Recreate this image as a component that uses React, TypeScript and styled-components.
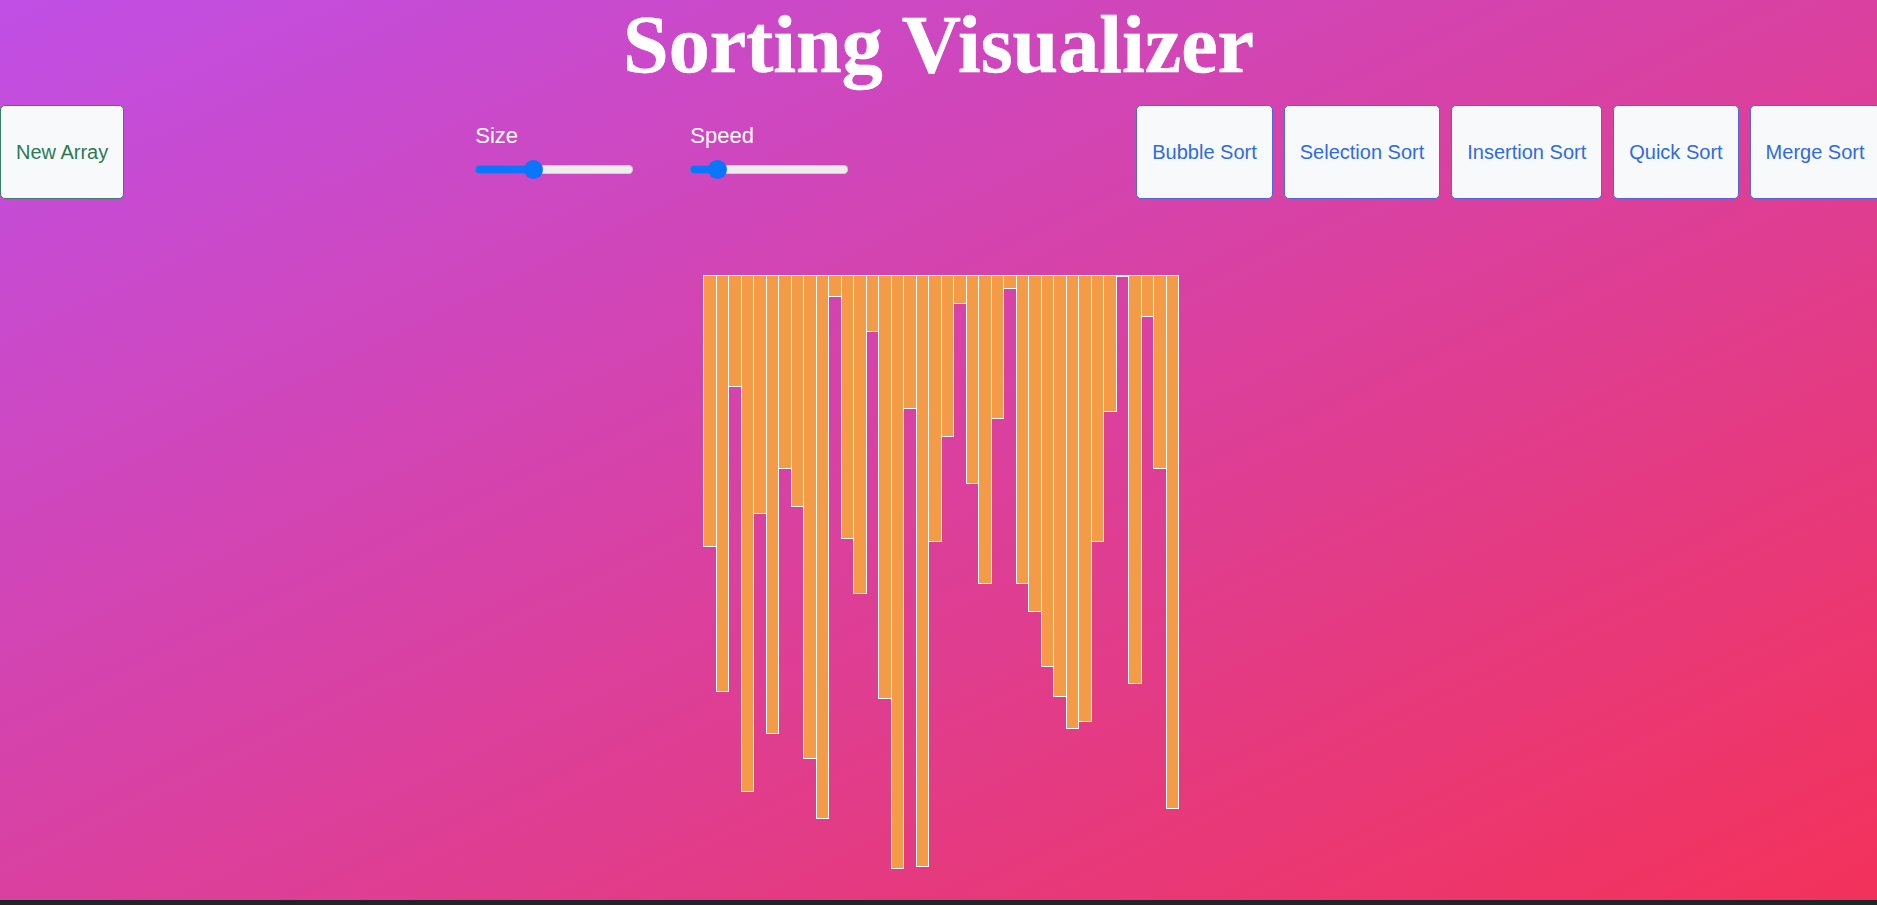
import { useState } from 'react';
import type { FC } from 'react';
import styled, { createGlobalStyle } from 'styled-components';

const barHeights = [
  272, 417, 112, 517, 239, 459, 194, 232, 484, 544, 22, 264, 319, 57, 424, 594, 134, 592, 267,
  162, 29, 209, 309, 144, 14, 309, 337, 392, 422, 454, 447, 267, 137, 2, 409, 42, 194, 534
];

const algorithms = ['Bubble Sort', 'Selection Sort', 'Insertion Sort', 'Quick Sort', 'Merge Sort'];

const App: FC = () => {
  const [size, setSize] = useState(35);
  const [speed, setSpeed] = useState(13);

  return (
    <>
      <GlobalStyle />
      <Page>
        <Title>Sorting Visualizer</Title>
        <Toolbar>
          <ActionButton $tone='success'>New Array</ActionButton>
          <Controls>
            <Control>
              <ControlLabel>Size</ControlLabel>
              <RangeSlider value={size} onChange={setSize} />
            </Control>
            <Control>
              <ControlLabel>Speed</ControlLabel>
              <RangeSlider value={speed} onChange={setSpeed} />
            </Control>
          </Controls>
          <SortGroup>
            {algorithms.map((name) => (
              <ActionButton key={name} $tone='primary'>
                {name}
              </ActionButton>
            ))}
          </SortGroup>
        </Toolbar>
        <BarArea>
          {barHeights.map((h, i) => (
            <Bar key={i} style={{ height: h }} />
          ))}
        </BarArea>
      </Page>
    </>
  );
};

export default App;

const RangeSlider: FC<{ value: number; onChange: (v: number) => void }> = ({ value, onChange }) => {
  // thumb is 19px wide on a 158px track, so the fill stops at the thumb centre
  const fill = `calc(9.5px + ${value / 100} * 139px)`;
  return (
    <Slider
      type='range'
      min={0}
      max={100}
      value={value}
      onChange={(e) => onChange(Number(e.target.value))}
      style={{ '--fill': fill } as React.CSSProperties}
    />
  );
};

const GlobalStyle = createGlobalStyle`
  html, body {
    margin: 0;
    padding: 0;
    background: #212529;
    overflow: hidden;
  }
  * {
    box-sizing: border-box;
  }
`;

const Page = styled.div`
  height: 900px;
  overflow: hidden;
  background: linear-gradient(to bottom right, #c04fe5, #f3325a);
  font-family: 'Liberation Sans', Arial, sans-serif;
`;

const Title = styled.h1`
  margin: 0;
  font-family: 'Liberation Serif', 'Times New Roman', serif;
  font-weight: 700;
  font-size: 82px;
  line-height: 90px;
  text-align: center;
  color: #ffffff;
  -webkit-text-stroke: 0.6px #ffffff;
`;

const Toolbar = styled.div`
  display: flex;
  align-items: center;
  margin-top: 15px;
  white-space: nowrap;
`;

const ActionButton = styled.button<{ $tone: 'success' | 'primary' }>`
  flex-shrink: 0;
  height: 94px;
  padding: 0 15px;
  border-radius: 5px;
  border: 1px solid ${(p) => (p.$tone === 'success' ? '#3a7d66' : '#4d68d8')};
  background: #f8f9fa;
  color: ${(p) => (p.$tone === 'success' ? '#2b7a55' : '#2f6be2')};
  font-family: 'Liberation Sans', Arial, sans-serif;
  font-size: 20px;
  cursor: pointer;
`;

const Controls = styled.div`
  display: flex;
  gap: 57px;
  margin-left: 351px;
  margin-bottom: 3px;
  flex-shrink: 0;
`;

const Control = styled.div`
  display: flex;
  flex-direction: column;
  gap: 12px;
`;

const ControlLabel = styled.label`
  font-size: 22px;
  line-height: 25px;
  color: #ffffff;
`;

const Slider = styled.input`
  -webkit-appearance: none;
  appearance: none;
  width: 158px;
  height: 19px;
  margin: 0;
  background: transparent;

  &::-webkit-slider-runnable-track {
    height: 9px;
    border-radius: 5px;
    background: linear-gradient(to right, #0b75fb var(--fill), #ededed var(--fill));
    box-shadow: inset 0 0 0 1px rgba(150, 150, 150, 0.35);
  }

  &::-webkit-slider-thumb {
    -webkit-appearance: none;
    width: 19px;
    height: 19px;
    margin-top: -5px;
    border-radius: 50%;
    background: #0b75fb;
    border: none;
  }
`;

const SortGroup = styled.div`
  display: flex;
  gap: 11px;
  margin-left: 288px;
  flex-shrink: 0;
`;

const BarArea = styled.div`
  display: flex;
  justify-content: center;
  align-items: flex-start;
  margin-top: 76px;
  padding-left: 5px;
`;

const Bar = styled.div`
  width: 13.5px;
  border: 1px solid #ffffff;
  background: #f49b47;

  & + & {
    margin-left: -1px;
  }
`;
